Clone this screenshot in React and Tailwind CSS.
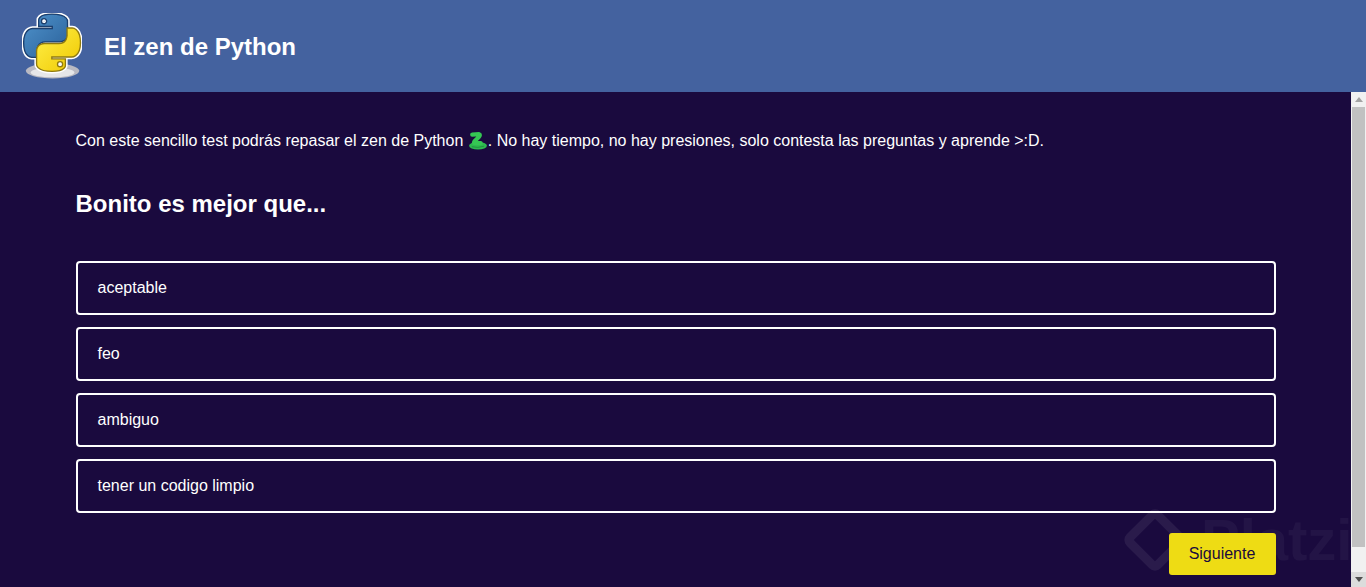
const OPTIONS = ['aceptable', 'feo', 'ambiguo', 'tener un codigo limpio']

const BLUE_PATH =
  'M54.9 2C29 2 30.6 13.2 30.6 13.2l0 11.6h24.9v3.6H20.6S3 26.4 3 54.4s15.4 27 15.4 27h9.2V68.400s-.5-15.400 15.200-15.400h26s14.700.2 14.700-14.200V15.800S85.500 2 54.900 2zM40.400 10.400a4.700 4.700 0 110 9.400 4.700 4.700 0 010-9.400z'
const YELLOW_PATH =
  'M55.300 107c25.900 0 24.300-11.200 24.300-11.200l0-11.600H54.700v-3.600h34.900s17.600 2 17.600-26-15.400-27-15.400-27h-9.200v13s.5 15.400-15.200 15.400h-26s-14.700-.2-14.700 14.200v23S24.700 107 55.300 107zM69.800 98.600a4.700 4.700 0 110-9.400 4.700 4.700 0 010 9.400z'

function PythonLogo() {
  return (
    <svg width="60" height="66" viewBox="0 0 110 121" className="shrink-0">
      <defs>
        <linearGradient id="pyBlue" x1="0" y1="0" x2="1" y2="1">
          <stop offset="0" stopColor="#4f93cc" />
          <stop offset="1" stopColor="#2a6099" />
        </linearGradient>
        <linearGradient id="pyYellow" x1="0" y1="0" x2="1" y2="1">
          <stop offset="0" stopColor="#fff04a" />
          <stop offset="1" stopColor="#f0c800" />
        </linearGradient>
      </defs>
      <ellipse cx="56" cy="106" rx="49" ry="14" fill="#b9b9c2" />
      <ellipse cx="56" cy="109" rx="40" ry="9" fill="#e6e6e8" />
      <path d={BLUE_PATH} fill="#fff" stroke="#fff" strokeWidth="8" strokeLinejoin="round" />
      <path d={YELLOW_PATH} fill="#fff" stroke="#fff" strokeWidth="8" strokeLinejoin="round" />
      <path d={BLUE_PATH} fill="url(#pyBlue)" stroke="#1c3f6e" strokeWidth="2.500" fillRule="evenodd" />
      <path d={YELLOW_PATH} fill="url(#pyYellow)" stroke="#8f7a10" strokeWidth="2.500" fillRule="evenodd" />
    </svg>
  )
}

function SnakeIcon() {
  return (
    <svg width="20" height="19" viewBox="0 0 19 18" className="inline-block align-[-4px]">
      <ellipse cx="9.500" cy="14" rx="8.500" ry="3.600" fill="#2db84f" />
      <path d="M4 3.500 L10.500 3 Q12 3.500 10.500 5.500 L6 10 Q5 11.500 7 11.500 L12 11.500" fill="none" stroke="#35c653" strokeWidth="4" strokeLinecap="round" strokeLinejoin="round" />
      <path d="M4 15 Q9 16.500 15 14.500" fill="none" stroke="#1f8a3c" strokeWidth="0.800" strokeLinecap="round" />
    </svg>
  )
}

function Watermark() {
  return (
    <div className="absolute left-[1125px] top-[511px] flex items-center gap-[22px] pointer-events-none">
      <div className="ml-[6px] w-[48px] h-[48px] rotate-45 rounded-[8px] border-[9px] border-white opacity-[0.07]" />
      <span className="text-[58px] font-bold text-white leading-none opacity-[0.04]">Platzi</span>
    </div>
  )
}

function Scrollbar() {
  return (
    <div className="w-[15px] shrink-0 bg-[#f1f1f1] flex flex-col items-center">
      <div className="h-[15px] w-full flex items-center justify-center">
        <div className="w-0 h-0 border-x-[4px] border-x-transparent border-b-[5px] border-b-[#a3a3a3]" />
      </div>
      <div className="w-[13px] flex-1 bg-[#c1c1c1]" />
      <div className="h-[15px] w-full flex items-center justify-center mt-[25px] bg-[#dcdcdc]">
        <div className="w-0 h-0 border-x-[4px] border-x-transparent border-t-[5px] border-t-[#505050]" />
      </div>
    </div>
  )
}

export default function App() {
  return (
    <div className="relative h-[587px] overflow-hidden flex flex-col bg-[#1a0a3e] font-['Liberation_Sans',Arial,sans-serif]">
      <header className="h-[92px] shrink-0 bg-[#44629f] flex items-center pl-[22px] gap-[22px]">
        <PythonLogo />
        <h1 className="text-[24px] leading-[36px] pt-[2px] font-bold text-white">El zen de Python</h1>
      </header>

      <div className="flex flex-1 min-h-0">
        <main className="flex-1 pl-[76px] pr-[75px] pt-[39px]">
          <p className="text-[16px] leading-[20px] text-white -ml-[0.5px]">
            Con este sencillo test podrás repasar el zen de Python <SnakeIcon />. No hay tiempo, no hay presiones, solo contesta las preguntas y aprende &gt;:D.
          </p>
          <h2 className="mt-[39px] text-[24px] leading-[28px] font-bold text-white -ml-[0.5px]">Bonito es mejor que...</h2>

          <div className="mt-[43px] flex flex-col gap-[12px]">
            {OPTIONS.map((option) => (
              <button
                key={option}
                type="button"
                className="h-[54px] rounded-[4px] border-2 border-white pl-[19.5px] pr-[20px] text-left text-[16px] text-white"
              >
                {option}
              </button>
            ))}
          </div>

          <div className="mt-[20px] flex justify-end">
            <button type="button" className="relative z-10 h-[42px] w-[107px] rounded-[3px] bg-[#eedc14] pr-[1px] text-[16px] text-[#1a0a3e]">
              Siguiente
            </button>
          </div>
        </main>
        <Scrollbar />
      </div>

      <Watermark />
    </div>
  )
}
